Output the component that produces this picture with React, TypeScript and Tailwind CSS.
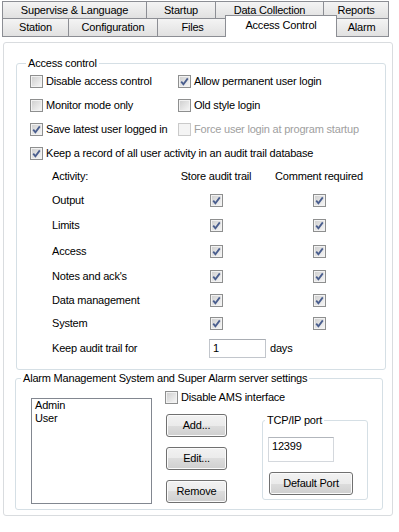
import React from 'react'

function Check({ checked = false, disabled = false }: { checked?: boolean; disabled?: boolean }) {
  return (
    <span
      className={`flex h-[13px] w-[13px] shrink-0 items-center justify-center border ${
        disabled
          ? 'border-[#cacaca] bg-[#f4f4f4]'
          : 'border-[#8e8f8f] bg-gradient-to-br from-[#cdcdcd] to-[#f8f8f8] shadow-[inset_0_0_0_1px_#f2f2f2]'
      }`}
    >
      {checked && (
        <svg width="11" height="11" viewBox="0 0 11 11">
          <path d="M2.2 5.6 L4.4 8.2 L8.8 2.4" fill="none" stroke="#4a5e8e" strokeWidth="1.8" />
        </svg>
      )}
    </span>
  )
}

function CheckRow({ label, checked, disabled }: { label: string; checked?: boolean; disabled?: boolean }) {
  return (
    <div className="flex items-center gap-[3px]">
      <Check checked={checked} disabled={disabled} />
      <span className={disabled ? 'text-[#a0a0a0]' : 'text-black'}>{label}</span>
    </div>
  )
}

function Tab({ label, w, className = '' }: { label: string; w: string; className?: string }) {
  return (
    <div
      className={`flex h-full items-center justify-center border border-[#8c8e94] bg-gradient-to-b from-[#f4f4f4] to-[#e1e1e1] ${w} ${className}`}
    >
      {label}
    </div>
  )
}

function Button({ label, w }: { label: string; w: string }) {
  return (
    <div
      className={`flex h-[23px] items-center justify-center rounded-[3px] border border-[#707070] bg-[linear-gradient(#f2f2f2_0%,#ebebeb_50%,#dddddd_50%,#cfcfcf_100%)] shadow-[inset_0_0_0_1px_#fbfbfb] ${w}`}
    >
      {label}
    </div>
  )
}

const activities: [string, string][] = [
  ['Output', 'h-[25px]'],
  ['Limits', 'h-[25px]'],
  ['Access', 'h-[26px]'],
  ["Notes and ack's", 'h-[25px]'],
  ['Data management', 'h-[22px]'],
  ['System', 'h-[24px]'],
]

export default function App() {
  return (
    <div className="h-[532px] w-[399px] overflow-hidden bg-white font-['Liberation_Sans',Arial,sans-serif] text-[11px] leading-[13px] tracking-[-0.2px] text-black">
      {/* tabs */}
      <div className="mt-px flex h-[18px] pl-[2px]">
        <Tab label="Supervise & Language" w="w-[145px]" />
        <Tab label="Startup" w="w-[70px]" className="-ml-px" />
        <Tab label="Data Collection" w="w-[109px]" className="-ml-px" />
        <Tab label="Reports" w="w-[66px]" className="-ml-px" />
      </div>
      <div className="-mt-px flex h-[19px] pl-[2px]">
        <Tab label="Station" w="w-[67px]" />
        <Tab label="Configuration" w="w-[90px]" className="-ml-px" />
        <Tab label="Files" w="w-[71px]" className="-ml-px" />
        <div className="relative z-10 -mt-[3px] -ml-[3px] flex h-[22px] w-[112px] items-start justify-center border border-b-0 border-[#8c8e94] bg-white pt-[3px]">
          Access Control
        </div>
        <Tab label="Alarm" w="w-[55px]" className="-ml-[3px]" />
      </div>

      {/* page */}
      <div className="mt-[5px] ml-[3px] h-[474px] w-[390px] rounded-[3px] border border-[#d9dcdf] pt-[14px]">
        <fieldset className="ml-[12px] w-[369px] rounded-[3px] border border-[#d5dfe5] pb-[8px]">
          <legend className="ml-[9px] px-[2px]">Access control</legend>
          <div className="grid grid-cols-[148px_1fr] pl-[13px]">
            <div className="flex h-[23px] items-center">
              <CheckRow label="Disable access control" />
            </div>
            <div className="flex h-[23px] items-center">
              <CheckRow label="Allow permanent user login" checked />
            </div>
            <div className="flex h-[24px] items-center">
              <CheckRow label="Monitor mode only" />
            </div>
            <div className="flex h-[24px] items-center">
              <CheckRow label="Old style login" />
            </div>
            <div className="flex h-[24px] items-center">
              <CheckRow label="Save latest user logged in" checked />
            </div>
            <div className="flex h-[24px] items-center">
              <CheckRow label="Force user login at program startup" disabled />
            </div>
            <div className="col-span-2 flex h-[24px] items-center">
              <CheckRow label="Keep a record of all user activity in an audit trail database" checked />
            </div>
          </div>

          <div className="pl-[35px]">
            <div className="grid h-[23px] grid-cols-[127px_74px_132px] items-center">
              <span>Activity:</span>
              <span className="text-center">Store audit trail</span>
              <span className="text-center">Comment required</span>
            </div>
            {activities.map(([name, h]) => (
              <div key={name} className={`grid grid-cols-[127px_74px_132px] items-center ${h}`}>
                <span>{name}</span>
                <span className="flex justify-center">
                  <Check checked />
                </span>
                <span className="flex justify-center">
                  <Check checked />
                </span>
              </div>
            ))}
            <div className="grid h-[26px] grid-cols-[127px_206px] items-center">
              <span>Keep audit trail for</span>
              <div className="flex items-center">
                <div className="ml-[30px] flex h-[19px] w-[57px] items-center border border-[#c2c6cc] border-t-[#a9adb3] bg-white pl-[3px]">
                  1
                </div>
                <span className="ml-[4px]">days</span>
              </div>
            </div>
          </div>
        </fieldset>

        <fieldset className="mt-[2px] ml-[11px] w-[368px] rounded-[3px] border border-[#d5dfe5] pb-[5px]">
          <legend className="ml-[5px] px-[2px]">Alarm Management System and Super Alarm server settings</legend>
          <div className="flex pl-[15px]">
            <div className="mt-[13px] h-[106px] w-[121px] border border-[#828790] bg-white pl-[3px]">
              <div>Admin</div>
              <div>User</div>
            </div>
            <div className="ml-[13px] flex flex-col">
              <div className="mt-[6px] flex h-[13px] items-center">
                <CheckRow label="Disable AMS interface" />
              </div>
              <div className="mt-[10px] flex items-start">
                <div className="ml-px flex w-[61px] flex-col gap-[10px]">
                  <Button label="Add..." w="w-[61px]" />
                  <Button label="Edit..." w="w-[61px]" />
                  <Button label="Remove" w="w-[61px]" />
                </div>
                <fieldset className="ml-[35px] w-[106px] rounded-[3px] border border-[#d5dfe5] pb-[4px]">
                  <legend className="ml-[2px] px-[2px]">TCP/IP port</legend>
                  <div className="mt-[10px] ml-[5px] h-[25px] w-[66px] border border-[#d4d8dd] border-t-[#b2b6bc] bg-white pt-[2px] pl-[3px]">
                    12399
                  </div>
                  <div className="mt-[10px] ml-[6px]">
                    <Button label="Default Port" w="w-[84px]" />
                  </div>
                </fieldset>
              </div>
            </div>
          </div>
        </fieldset>
      </div>
    </div>
  )
}
